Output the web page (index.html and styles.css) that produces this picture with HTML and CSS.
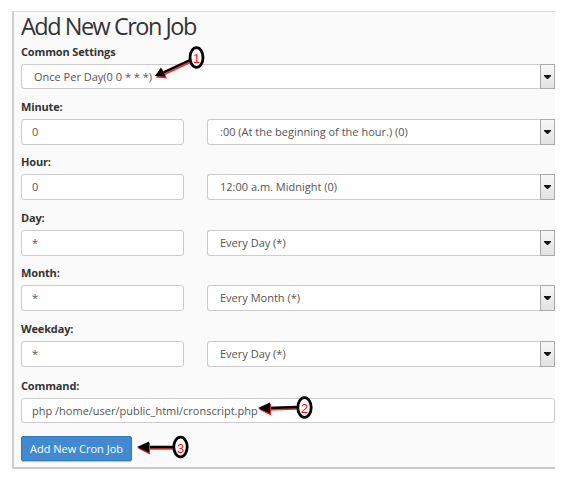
FILE: index.html
```html
<!DOCTYPE html>
<html>
<head>
<meta charset="utf-8">
<link rel="stylesheet" href="styles.css">
</head>
<body>
<div class="panel">
  <h1 class="title">Add New Cron Job</h1>
  <div class="group first">
    <label class="label">Common Settings</label>
    <div class="select full short"><span>Once Per Day(0 0 * * *)</span><i class="drop"><svg width="7" height="4" viewBox="0 0 7 4"><path d="M0 0H7V1L4 4H3L0 1Z" fill="#111"/></svg></i></div>
  </div>
  <div class="group">
    <label class="label">Minute:</label>
    <div class="row"><div class="input">0</div><div class="select"><span>:00 (At the beginning of the hour.) (0)</span><i class="drop"><svg width="7" height="4" viewBox="0 0 7 4"><path d="M0 0H7V1L4 4H3L0 1Z" fill="#111"/></svg></i></div></div>
  </div>
  <div class="group">
    <label class="label">Hour:</label>
    <div class="row"><div class="input">0</div><div class="select"><span>12:00 a.m. Midnight (0)</span><i class="drop"><svg width="7" height="4" viewBox="0 0 7 4"><path d="M0 0H7V1L4 4H3L0 1Z" fill="#111"/></svg></i></div></div>
  </div>
  <div class="group">
    <label class="label">Day:</label>
    <div class="row"><div class="input">*</div><div class="select"><span>Every Day (*)</span><i class="drop"><svg width="7" height="4" viewBox="0 0 7 4"><path d="M0 0H7V1L4 4H3L0 1Z" fill="#111"/></svg></i></div></div>
  </div>
  <div class="group">
    <label class="label">Month:</label>
    <div class="row"><div class="input">*</div><div class="select"><span>Every Month (*)</span><i class="drop"><svg width="7" height="4" viewBox="0 0 7 4"><path d="M0 0H7V1L4 4H3L0 1Z" fill="#111"/></svg></i></div></div>
  </div>
  <div class="group">
    <label class="label">Weekday:</label>
    <div class="row"><div class="input">*</div><div class="select"><span>Every Day (*)</span><i class="drop"><svg width="7" height="4" viewBox="0 0 7 4"><path d="M0 0H7V1L4 4H3L0 1Z" fill="#111"/></svg></i></div></div>
  </div>
  <div class="group cmd">
    <label class="label">Command:</label>
    <div class="input full cmdinput">php /home/user/public_html/cronscript.php</div>
  </div>
  <button class="btn">Add New Cron Job</button>
</div>
<svg class="notes" width="567" height="480" viewBox="0 0 567 480">
  <g stroke-linecap="round">
    <line x1="190" y1="60" x2="162" y2="73" stroke="#e33" stroke-width="3.2" transform="translate(0.8,1.2)"/>
    <line x1="190" y1="60" x2="162" y2="73" stroke="#000" stroke-width="2.4"/>
    <path d="M155 76 L161 67 L166 77 Z" fill="#e22" transform="translate(1,1.5)"/>
    <path d="M155 76 L161 67.5 L165.5 76.5 Z" fill="#000"/>
    <ellipse cx="196.5" cy="57.5" rx="6.5" ry="9.8" fill="#fff" stroke="#000" stroke-width="2.8"/>
    <text x="196.5" y="63" class="num">1</text>

    <line x1="268" y1="408" x2="297" y2="407" stroke="#e33" stroke-width="3.2" transform="translate(0,1.2)"/>
    <line x1="268" y1="408" x2="297" y2="407" stroke="#000" stroke-width="2.4"/>
    <path d="M258 408 L270 402 L270 414 Z" fill="#e22" transform="translate(1,1.5)"/>
    <path d="M258 408 L270 402.5 L270 413.5 Z" fill="#000"/>
    <ellipse cx="304.5" cy="407.5" rx="6.7" ry="9.8" fill="#fff" stroke="#000" stroke-width="2.8"/>
    <text x="304.5" y="413" class="num">2</text>

    <line x1="146" y1="447" x2="173" y2="447" stroke="#e33" stroke-width="3.2" transform="translate(0,1.2)"/>
    <line x1="146" y1="447" x2="173" y2="447" stroke="#000" stroke-width="2.4"/>
    <path d="M137 447 L149 441 L149 453 Z" fill="#e22" transform="translate(1,1.5)"/>
    <path d="M137 447 L149 441.5 L149 452.5 Z" fill="#000"/>
    <ellipse cx="180.5" cy="447" rx="6.7" ry="9.8" fill="#fff" stroke="#000" stroke-width="2.8"/>
    <text x="180.5" y="452.5" class="num">3</text>
  </g>
</svg>
</body>
</html>
```
FILE: styles.css
```css
html, body {
  margin: 0;
  padding: 0;
  background: #fff;
}
body {
  font-family: "Open Sans", "Liberation Sans", sans-serif;
  color: #333;
  position: relative;
  width: 567px;
  height: 480px;
  overflow: hidden;
}
.panel {
  margin: 11px 0 0 12px;
  width: 534px;
  padding: 0 0 6px 7px;
  background: #fafafa;
  border-top: 1px solid #dcdcdc;
  border-left: 2px solid #cfcfcf;
  border-bottom: 2px solid #cbcbcb;
}
.title {
  margin: 0;
  font-size: 23.5px;
  font-weight: 400;
  letter-spacing: -1.5px;
  line-height: 28px;
  color: #333;
}
.group {
  margin-top: 9.5px;
}
.group.first {
  margin-top: 4px;
}
.group.cmd {
  margin-top: 11px;
}
.label {
  display: block;
  font-size: 11px;
  font-weight: 700;
  letter-spacing: -0.15px;
  line-height: 16px;
  margin-bottom: 4px;
  color: #333;
}
.row {
  display: flex;
  gap: 23px;
}
.input, .select {
  box-sizing: border-box;
  height: 26px;
  background: #fff;
  border: 1px solid #ccc;
  border-radius: 3px;
  font-size: 11px;
  line-height: 24px;
  color: #555;
  white-space: nowrap;
}
.input {
  width: 163px;
  padding-left: 10px;
}
.input.full {
  width: 534px;
}
.cmdinput {
  height: 25px;
  line-height: 23px;
}
.select {
  flex: 1;
  display: flex;
  justify-content: space-between;
  padding-left: 12px;
  border-right: none;
  border-radius: 3px 0 0 3px;
}
.select.full {
  width: 534px;
}
.select.short {
  height: 25px;
  line-height: 23px;
}
.drop {
  box-sizing: border-box;
  width: 15px;
  margin: -1px 0 -1px 0;
  border: 1px solid #aaa;
  background: linear-gradient(#f7f7f7, #e2e2e2);
  display: flex;
  align-items: center;
  justify-content: center;
}
.drop svg {
  display: block;
}
.btn {
  display: block;
  margin-top: 13px;
  height: 25px;
  width: 111px;
  padding: 0;
  font-family: "Open Sans", "Liberation Sans", sans-serif;
  font-size: 11px;
  color: #fff;
  background: #3f8ad0;
  border: 1px solid #3479ba;
  border-radius: 2px;
  box-shadow: 0 1px 1px rgba(0, 0, 0, 0.25);
}
.notes {
  position: absolute;
  left: 0;
  top: 0;
  pointer-events: none;
}
.num {
  font-family: "Liberation Sans", sans-serif;
  font-size: 13px;
  fill: #e11;
  text-anchor: middle;
}
```
